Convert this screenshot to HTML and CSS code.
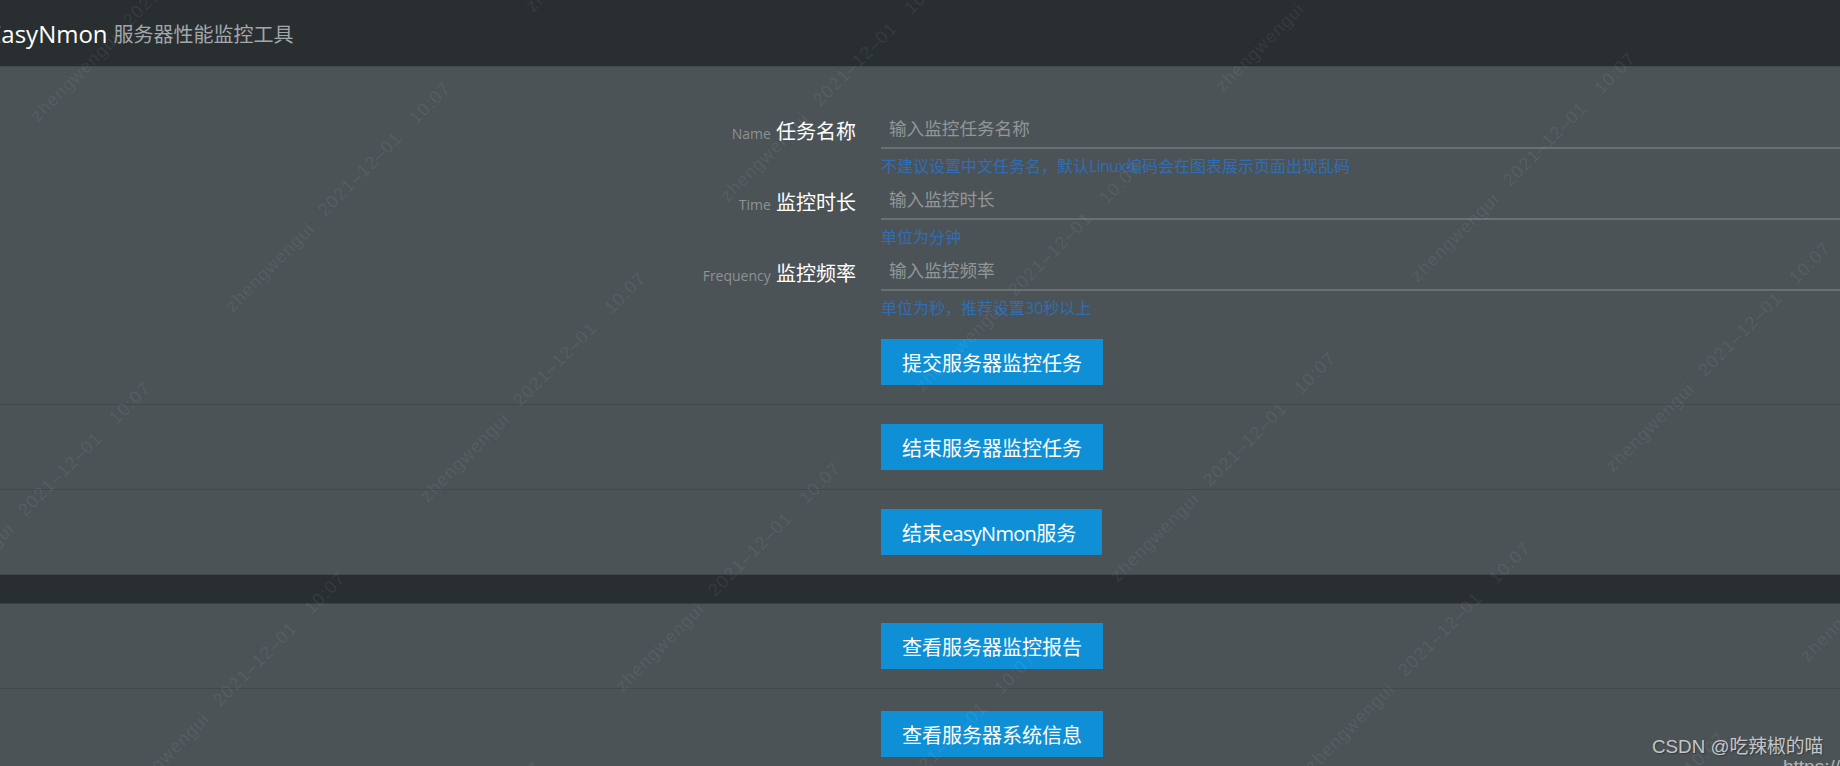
FILE: index.html
```html
<!DOCTYPE html>
<html lang="zh">
<head>
    <meta charset="UTF-8">
    <title>EasyNmon 服务器性能监控工具</title>
    <link rel="stylesheet" href="styles.css">
</head>
<body>
    <header class="topbar">
        <span class="brand">EasyNmon</span>
        <span class="brand-sub">服务器性能监控工具</span>
    </header>

    <form class="panel form-panel">
        <div class="form-group">
            <label class="form-label"><small>Name</small> 任务名称</label>
            <div class="form-field">
                <input type="text" placeholder="输入监控任务名称">
                <p class="help">不建议设置中文任务名，默认<span class="latin">Linux</span>编码会在图表展示页面出现乱码</p>
            </div>
        </div>
        <div class="form-group">
            <label class="form-label"><small>Time</small> 监控时长</label>
            <div class="form-field">
                <input type="text" placeholder="输入监控时长">
                <p class="help">单位为分钟</p>
            </div>
        </div>
        <div class="form-group">
            <label class="form-label"><small>Frequency</small> 监控频率</label>
            <div class="form-field">
                <input type="text" placeholder="输入监控频率">
                <p class="help">单位为秒，推荐设置30秒以上</p>
            </div>
        </div>
        <div class="action action-submit">
            <button type="button" class="btn">提交服务器监控任务</button>
        </div>
        <div class="action">
            <button type="button" class="btn">结束服务器监控任务</button>
        </div>
        <div class="action">
            <button type="button" class="btn btn-narrow">结束<span class="latin">easyNmon</span>服务</button>
        </div>
    </form>

    <div class="band"></div>

    <div class="panel">
        <div class="action">
            <button type="button" class="btn">查看服务器监控报告</button>
        </div>
        <div class="action action-last">
            <button type="button" class="btn">查看服务器系统信息</button>
        </div>
    </div>

    <div id="watermarks" class="watermarks"></div>
    <div class="csdn-mark">CSDN @吃辣椒的喵</div>
    <div class="csdn-url">https://</div>

    <script src="watermark.js"></script>
</body>
</html>
```

FILE: styles.css
```css
html, body {
    height: 100%;
}
body {
    margin: 0;
    overflow: hidden;
    position: relative;
    background: #4c5356;
    font-family: "Open Sans", "Noto Sans CJK SC", sans-serif;
    color: #fff;
}
.topbar {
    height: 66px;
    display: flex;
    align-items: center;
    gap: 6px;
    background: #292e31;
    border-bottom: 1px solid #43494c;
    white-space: nowrap;
}
.brand {
    margin-left: -12px;
    font-size: 24px;
    color: #fff;
}
.brand-sub {
    font-size: 20px;
    color: #a3a7a9;
}
.form-panel {
    padding-top: 38px;
}
.form-group {
    display: grid;
    grid-template-columns: 856px 1fr;
    column-gap: 25px;
    height: 71px;
}
.form-label {
    height: 44px;
    padding-top: 6px;
    box-sizing: border-box;
    text-align: right;
    font-size: 20px;
    line-height: 42px;
    white-space: nowrap;
}
.form-label small {
    font-size: 14px;
    color: #8d9293;
}
.form-field input {
    display: block;
    width: 100%;
    height: 44px;
    box-sizing: border-box;
    padding: 4px 8px 0;
    background: transparent;
    border: none;
    border-bottom: 2px solid #6a7072;
    outline: none;
    font-family: inherit;
    font-size: 17.6px;
    color: #fff;
}
.form-field input::placeholder {
    color: #929697;
    opacity: 1;
}
.help {
    margin: 0;
    font-size: 16px;
    line-height: 27px;
    padding-top: 4px;
    color: #2f6eb7;
    white-space: nowrap;
}
.latin {
    letter-spacing: -0.7px;
}
.action {
    padding: 19px 0 19px 881px;
    border-bottom: 1px solid #42484b;
}
.action-submit {
    padding-top: 21px;
}
.action-last {
    padding-top: 22px;
    border-bottom: none;
}
.btn {
    display: block;
    width: 222px;
    height: 46px;
    padding: 0;
    background: #0f90d6;
    border: none;
    border-radius: 0;
    font-family: inherit;
    font-size: 20px;
    color: #fff;
    cursor: pointer;
}
.btn-narrow {
    width: 221px;
    padding-left: 21px;
    text-align: left;
}
.band {
    height: 28px;
    background: #292e31;
    border-bottom: 1px solid #3a4043;
}
.watermarks {
    position: absolute;
    inset: 0;
    overflow: hidden;
    pointer-events: none;
}
.mark {
    position: absolute;
    font-family: "Liberation Sans", sans-serif;
    font-size: 18px;
    letter-spacing: 1px;
    line-height: 20px;
    white-space: nowrap;
    color: rgba(255, 255, 255, 0.07);
    transform: translate(-50%, -50%) rotate(-45deg);
}
.csdn-mark {
    position: absolute;
    top: 735px;
    left: 1652px;
    font-family: "Liberation Sans", "Noto Sans CJK SC", sans-serif;
    font-size: 18.8px;
    line-height: 24px;
    white-space: nowrap;
    color: #c4c6c7;
    text-shadow: 1px 1px 1px #33383a;
}
.csdn-url {
    position: absolute;
    top: 756px;
    left: 1783px;
    font-family: "Liberation Sans", sans-serif;
    font-size: 19px;
    line-height: 22px;
    white-space: nowrap;
    color: #b0b3b4;
}
```

FILE: watermark.js
```js
// lattice of the repeated watermark: name, date, time
const box = document.getElementById("watermarks");
const items = [
    { text: "zhengwengui", dx: 0, dy: 0 },
    { text: "2021–12–01", dx: 90, dy: -93 },
    { text: "10:07", dx: 160, dy: -164 }
];

for (let i = -4; i <= 4; i++) {
    for (let j = -6; j <= 6; j++) {
        const baseX = 270 + i * 690 + j * 195;
        const baseY = 267 + i * 80 + j * 190;
        items.forEach(item => {
            const x = baseX + item.dx;
            const y = baseY + item.dy;
            if (x < -80 || x > 1920 || y < -80 || y > 846) {
                return;
            }
            const el = document.createElement("span");
            el.className = "mark";
            el.textContent = item.text;
            el.style.left = x + "px";
            el.style.top = y + "px";
            box.appendChild(el);
        });
    }
}
```
